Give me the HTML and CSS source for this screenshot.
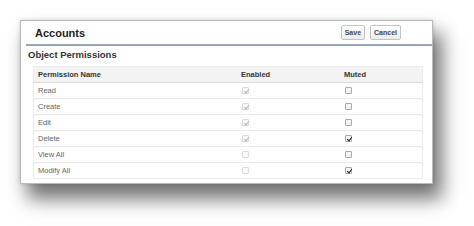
FILE: index.html
```html
<!DOCTYPE html>
<html>
	<head>
		<title>Accounts</title>
		<link rel="stylesheet" href="styles.css">
	</head>
	<body>
		<div class="page">
			<div class="card">
				<div class="cardHead">
					<h2>Accounts</h2>
					<div class="buttons">
						<button type="button">Save</button>
						<button type="button">Cancel</button>
					</div>
				</div>
				<h3>Object Permissions</h3>
				<table class="perms">
					<tr>
						<th class="colName">Permission Name</th>
						<th class="colEnabled">Enabled</th>
						<th>Muted</th>
					</tr>
					<tr>
						<td>Read</td>
						<td><span class="cb off on"></span></td>
						<td><span class="cb"></span></td>
					</tr>
					<tr>
						<td>Create</td>
						<td><span class="cb off on"></span></td>
						<td><span class="cb"></span></td>
					</tr>
					<tr>
						<td>Edit</td>
						<td><span class="cb off on"></span></td>
						<td><span class="cb"></span></td>
					</tr>
					<tr>
						<td>Delete</td>
						<td><span class="cb off on"></span></td>
						<td><span class="cb on"></span></td>
					</tr>
					<tr>
						<td>View All</td>
						<td><span class="cb off"></span></td>
						<td><span class="cb"></span></td>
					</tr>
					<tr>
						<td>Modify All</td>
						<td><span class="cb off"></span></td>
						<td><span class="cb on"></span></td>
					</tr>
				</table>
			</div>
		</div>
	</body>
</html>
```

FILE: styles.css
```css
html, body{
	height: 100%;
}
body{
	margin: 0;
	background: #fff;
	font-family: "Liberation Sans", Arial, sans-serif;
}
.page{
	box-sizing: border-box;
	min-height: 226px;
	padding: 20px 0 0 20px;
}
.card{
	width: 411px;
	height: 162px;
	background: #fff;
	border: 1px solid #b9b9b9;
	box-shadow: 8px 14px 18px 1px rgba(0, 0, 0, 0.55), 0 0 4px rgba(0, 0, 0, 0.15);
}
.cardHead{
	display: flex;
	justify-content: space-between;
	align-items: center;
	height: 23px;
	margin-left: 5px;
	padding: 0 31px 0 9px;
	border-bottom: 2px solid #97a4bd;
}
h2{
	margin: 0;
	font-size: 11px;
	font-weight: bold;
	color: #222;
}
.buttons{
	display: flex;
	gap: 5px;
}
button{
	height: 15px;
	padding: 0 3px;
	font-family: "Liberation Sans", Arial, sans-serif;
	font-size: 7px;
	font-weight: bold;
	color: #444;
	background: linear-gradient(#fff, #ececec);
	border: 1px solid #c4c4c4;
	border-radius: 2px;
}
h3{
	margin: 3px 0 0 7px;
	font-size: 9.5px;
	font-weight: bold;
	color: #333;
	height: 17px;
	line-height: 12px;
}
.perms{
	margin-left: 12px;
	width: 390px;
	border-collapse: collapse;
	border: 1px solid #ececec;
	font-size: 7.5px;
}
th, td{
	height: 15px;
	padding: 0 4px;
	text-align: left;
	border-bottom: 1px solid #e9e9e9;
	color: #666;
}
th{
	background: #f3f3f3;
	color: #333;
	border-bottom: 1px solid #dcdcdc;
}
.colName{
	width: 195px;
}
.colEnabled{
	width: 95px;
}
.cb{
	display: block;
	width: 5px;
	height: 5px;
	border: 1px solid #aaa;
	border-radius: 1px;
	background: #f4f4f4;
	margin-left: 1px;
	position: relative;
}
.cb.off{
	border-color: #dcdcdc;
	background: #fafafa;
}
.cb.on::after{
	content: "";
	position: absolute;
	left: 1.5px;
	top: -0.5px;
	width: 2px;
	height: 4px;
	border: solid #222;
	border-width: 0 1.5px 1.5px 0;
	transform: rotate(40deg);
}
.cb.off.on::after{
	border-color: #b5b5b5;
}
```
